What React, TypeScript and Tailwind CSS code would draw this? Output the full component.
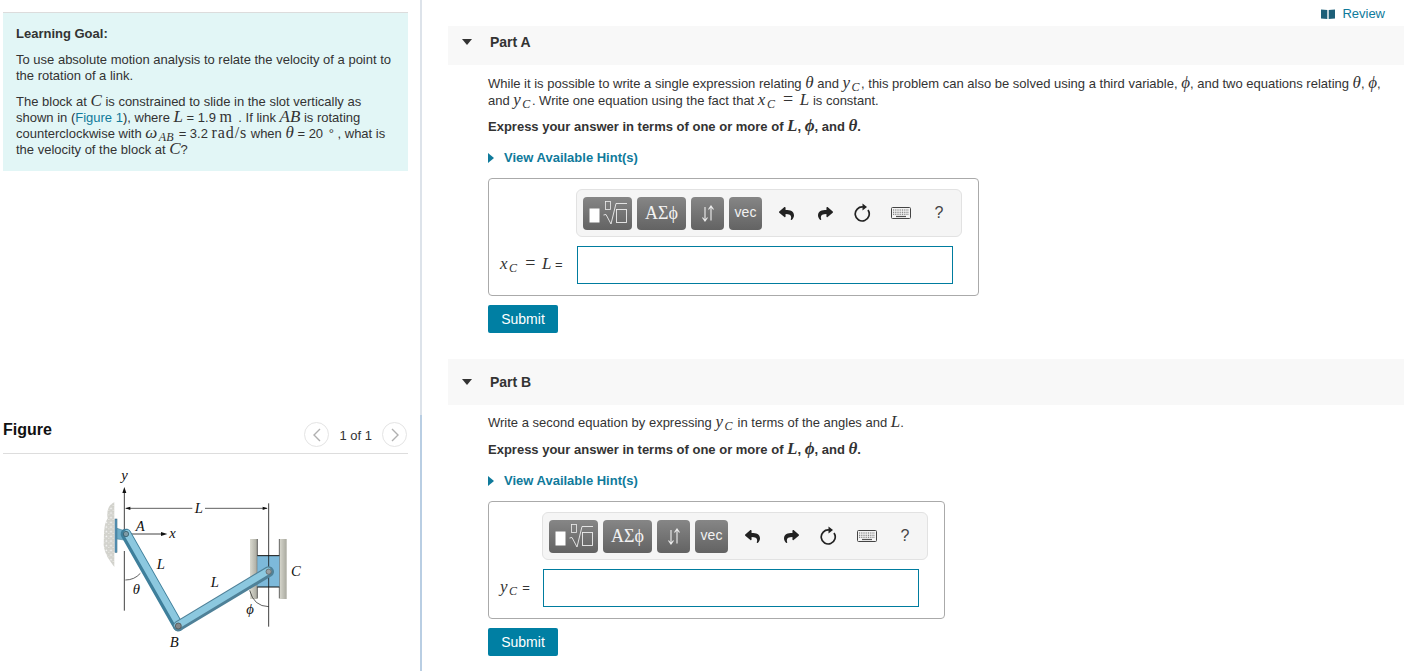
import type { ReactNode } from "react";
import { FaReply, FaShare } from "react-icons/fa";

const serif = "font-['Liberation_Serif',serif] leading-[0]";

const M = ({ children }: { children: ReactNode }) => <i className={`${serif} text-[17px]`}>{children}</i>;

const Sub = ({ v, s }: { v: string; s: string }) => (
  <span className={`${serif} text-[17px]`}>
    <i>{v}</i>
    <i className="relative top-[3px] mx-[1.5px] text-[12px]">{s}</i>
  </span>
);

const Eq = () => <span className={`${serif} mx-[3px] text-[18px]`}>=</span>;

function RootIcon() {
  return (
    <svg width="38" height="26" viewBox="0 0 38 26" fill="none" stroke="#eee">
      <rect x="0.5" y="8.5" width="10" height="14" fill="#fff" stroke="none" />
      <rect x="16.5" y="1.5" width="5" height="8" strokeWidth="0.8" />
      <path d="M14.5 15 L17 14.5 L22 24 L27 3.5 L38 3.5" strokeWidth="0.9" />
      <rect x="27.5" y="9.5" width="10" height="13" strokeWidth="0.9" />
    </svg>
  );
}

function ArrowsIcon() {
  return (
    <svg width="14" height="17" viewBox="0 0 14 17" fill="none" stroke="#eee" strokeWidth="1.1">
      <path d="M4 2 V15.5 M1.5 12.5 L4 16 L6.5 12.5" />
      <path d="M10 15.5 V1.5 M7.5 4.5 L10 1 L12.5 4.5" />
    </svg>
  );
}

function ResetIcon() {
  return (
    <svg width="18" height="20" viewBox="0 0 18 20" fill="none">
      <path d="M14 7 A7 7 0 1 1 9 4" stroke="#222" strokeWidth="1.7" />
      <path d="M8.5 0.5 L13 4 L8.5 7.5 Z" fill="#222" />
    </svg>
  );
}

function KeyboardIcon() {
  return (
    <svg width="20" height="12" viewBox="0 0 20 12">
      <rect x="0.5" y="0.5" width="19" height="11" rx="1" fill="#f4f4f4" stroke="#444" />
      <path d="M2 3 H18 M2 5.2 H18 M2 7.2 H18" stroke="#666" strokeWidth="1.1" strokeDasharray="1 0.8" />
      <path d="M5 9.5 H15" stroke="#555" strokeWidth="1.2" />
    </svg>
  );
}

function Toolbar() {
  const btn =
    "flex h-[33px] items-center justify-center rounded-[4px] bg-gradient-to-b from-[#868686] to-[#636363] text-[#f2f2f2]";
  return (
    <div className="flex h-[48px] w-[386px] items-center rounded-[6px] border border-[#e2e2e2] bg-[#f5f5f5] pl-[6px]">
      <div className="flex gap-[5px]">
        <div className={`${btn} w-[49px] pl-[6px] justify-start`}>
          <RootIcon />
        </div>
        <div className={`${btn} w-[49px] font-['Liberation_Serif',serif] text-[18px]`}>ΑΣϕ</div>
        <div className={`${btn} w-[33px]`}>
          <ArrowsIcon />
        </div>
        <div className={`${btn} w-[33px] pb-[3px] text-[14px]`}>vec</div>
      </div>
      <div className="ml-[14px] flex items-center text-[#222]">
        <span className="flex w-[20px] justify-center"><FaReply size={15} /></span>
        <span className="ml-[19px] flex w-[20px] justify-center"><FaShare size={15} /></span>
        <span className="ml-[18px] flex w-[20px] justify-center"><ResetIcon /></span>
        <span className="ml-[18px] flex w-[20px] justify-center"><KeyboardIcon /></span>
        <span className="ml-[18px] flex w-[20px] justify-center text-[16px] text-[#444]">?</span>
      </div>
    </div>
  );
}

function Hint() {
  return (
    <div className="mt-[15px] flex h-[16px] items-center font-bold text-[#0f7a9b]">
      <span className="h-0 w-0 border-y-[5px] border-l-[6px] border-y-transparent border-l-[#0f7a9b]" />
      <span className="ml-[10px]">View Available Hint(s)</span>
    </div>
  );
}

function PartBar({ title, h }: { title: string; h: string }) {
  return (
    <div className={`flex items-center bg-[#f8f8f8] pl-[14px] ${h}`}>
      <span className="h-0 w-0 border-x-[5px] border-t-[6px] border-x-transparent border-t-[#333]" />
      <span className="ml-[18px] text-[14px] font-bold text-[#333]">{title}</span>
    </div>
  );
}

function Diagram() {
  return (
    <svg width="220" height="200" viewBox="0 0 660 600" className="ml-[88px] mt-[11px]">
      <defs>
        <pattern id="rock" width="14" height="14" patternUnits="userSpaceOnUse">
          <rect width="14" height="14" fill="#d4d4ce" />
          <circle cx="4" cy="4" r="3.4" fill="#fbfbf8" stroke="#b3b3ac" />
          <circle cx="11" cy="10" r="2.8" fill="#f8f8f4" stroke="#acaca5" />
        </pattern>
        <linearGradient id="wall" x1="0" y1="0" x2="1" y2="0">
          <stop offset="0" stopColor="#d9d9cf" />
          <stop offset="1" stopColor="#a9a99f" />
        </linearGradient>
      </defs>
      {/* ground and plate */}
      <path d="M70 112 C52 118 46 140 50 160 C36 180 40 215 38 240 C42 270 55 285 70 306 Z" fill="url(#rock)" />
      <rect x="72" y="162" width="6" height="100" fill="#5d9dc0" stroke="#28566f" strokeWidth="1.5" />
      <path d="M78 190 L110 200 L100 225 L78 222 Z" fill="#6dacc8" stroke="#3f7a94" strokeWidth="1.5" />
      {/* walls */}
      <rect x="477" y="222" width="22" height="180" fill="url(#wall)" />
      <rect x="565" y="222" width="22" height="180" fill="url(#wall)" />
      <path d="M499 222 V400 M565 222 V400" stroke="#222" strokeWidth="2" />
      <rect x="499" y="272" width="66" height="94" fill="#7db9da" />
      <path d="M499 272 H565 M499 366 H565" stroke="#111" strokeWidth="3" />
      {/* guide lines */}
      <path d="M100 80 V207 M100 258 V437 M533 115 V485" stroke="#111" strokeWidth="2.4" fill="none" />
      <path d="M100 66 L94 84 H106 Z" fill="#111" />
      <path d="M104 130 H304 M342 130 H528" stroke="#111" strokeWidth="2" />
      <path d="M103 130 L118 125 V135 Z M530 130 L515 125 V135 Z" fill="#111" />
      <path d="M100 207 H215" stroke="#111" strokeWidth="2.4" />
      <path d="M229 207 L210 201 V213 Z" fill="#111" />
      <path d="M103 345 Q130 345 148 325" stroke="#111" strokeWidth="2" fill="none" />
      <path d="M476 376 Q488 424 533 425" stroke="#111" strokeWidth="2" fill="none" />
      {/* links */}
      <line x1="105" y1="207" x2="262" y2="483" stroke="#3e7f9b" strokeWidth="32" strokeLinecap="round" />
      <line x1="108" y1="205" x2="265" y2="481" stroke="#8cc8df" strokeWidth="20" strokeLinecap="round" />
      <line x1="262" y1="483" x2="533" y2="320" stroke="#4f8198" strokeWidth="32" strokeLinecap="round" />
      <line x1="260" y1="481" x2="531" y2="318" stroke="#8cc8df" strokeWidth="20" strokeLinecap="round" />
      <circle cx="105" cy="207" r="8" fill="#7e9aa5" stroke="#27505f" strokeWidth="2" />
      <circle cx="262" cy="483" r="9" fill="#85888a" stroke="#444" strokeWidth="2" />
      <circle cx="533" cy="320" r="8" fill="#9aa0a2" stroke="#555" strokeWidth="2" />
      <g fontFamily="'Liberation Serif',serif" fontStyle="italic" fontSize="44" fill="#111">
        <text x="91" y="44">y</text>
        <text x="134" y="197">A</text>
        <text x="235" y="218">x</text>
        <text x="311" y="144">L</text>
        <text x="197" y="311">L</text>
        <text x="359" y="365">L</text>
        <text x="125" y="386">θ</text>
        <text x="466" y="447">ϕ</text>
        <text x="236" y="546">B</text>
        <text x="600" y="334">C</text>
      </g>
    </svg>
  );
}

export default function App() {
  return (
    <div className="flex h-[671px] overflow-hidden bg-white font-['Liberation_Sans',Arial,sans-serif] text-[13px] leading-[16px] text-[#333]">
      <div className="flex w-[422px] shrink-0 flex-col">
        <div className="h-[415px] border-r-2 border-[#dde3ea] pl-[3px] pr-[12px] pt-[12px]">
          <div className="h-[159px] border-t border-[#dcdcdc] bg-[#e2f6f6] px-[13px] pt-[13px]">
            <p className="font-bold">Learning Goal:</p>
            <p className="mt-[10px]">
              To use absolute motion analysis to relate the velocity of a point to the rotation of a link.
            </p>
            <p className="mt-[10px]">
              The block at <M>C</M> is constrained to slide in the slot vertically as shown in (
              <span className="text-[#0f7a9b]">Figure 1</span>), where <M>L</M> = 1.9 <span className={`${serif} mr-[2px] text-[16px] tracking-[0.8px]`}>m</span> . If
              link <M>AB</M> is rotating counterclockwise with <Sub v="ω" s="AB" /> = 3.2{" "}
              <span className={`${serif} text-[16px] tracking-[0.9px]`}>rad/s</span> when <M>θ</M> = 20 <span className="ml-[2px]">°</span> , what is the
              velocity of the block at <M>C</M>?
            </p>
          </div>
        </div>
        <div className="flex-1 border-r-2 border-[#b9cee3] pl-[3px] pr-[12px]">
          <div className="flex h-[39px] items-end justify-between border-b border-[#dddddd] pb-[6px]">
            <span className="mb-[9px] text-[16px] font-bold text-[#111]">Figure</span>
            <div className="mr-[1px] flex items-center">
              <span className="flex h-[25px] w-[25px] items-center justify-center rounded-full border border-[#e4e4e4]">
                <svg width="8" height="14" viewBox="0 0 8 14" fill="none" stroke="#b0b0b0" strokeWidth="1.4"><path d="M7 1 L1 7 L7 13" /></svg>
              </span>
              <span className="mx-[10px] translate-y-[1px] text-[#333]">1 of 1</span>
              <span className="flex h-[25px] w-[25px] items-center justify-center rounded-full border border-[#e4e4e4]">
                <svg width="8" height="14" viewBox="0 0 8 14" fill="none" stroke="#b0b0b0" strokeWidth="1.4"><path d="M1 1 L7 7 L1 13" /></svg>
              </span>
            </div>
          </div>
          <Diagram />
        </div>
      </div>

      <div className="w-[982px] pl-[26px]">
        <div className="flex h-[26px] items-center justify-end pr-[19px] pt-[1px] text-[#0f7a9b]">
          <svg width="14" height="10" viewBox="0 0 14 10" className="mr-[7px]" fill="#1d5f78">
            <path d="M0 0.5 L6.3 1 V10 L0 9.5 Z" />
            <path d="M14 0.5 L7.7 1 V10 L14 9.5 Z" />
          </svg>
          Review
        </div>
        <PartBar title="Part A" h="h-[39px] pb-[7px]" />
        <div className="pl-[40px] pt-[10px]">
          <p className="w-[905px] leading-[17px]">
            While it is possible to write a single expression relating <M>θ</M> and <Sub v="y" s="C" />, this problem can also be solved using a third
            variable, <M>ϕ</M>, and two equations relating <M>θ</M>, <M>ϕ</M>, and <Sub v="y" s="C" />. Write one equation using the fact that{" "}
            <Sub v="x" s="C" /> <Eq /> <M>L</M> is constant.
          </p>
          <p className="mt-[10px] font-bold">
            Express your answer in terms of one or more of <M>L</M>, <M>ϕ</M>, and <M>θ</M>.
          </p>
          <Hint />
          <div className="mt-[12px] flex h-[118px] w-[491px] flex-col rounded-[4px] border border-[#aaaaaa] pt-[10px]">
            <div className="ml-[87px]"><Toolbar /></div>
            <div className="mt-[9px] flex items-center pl-[11px]">
              <span className="w-[77px] whitespace-nowrap">
                <Sub v="x" s="C" /> <Eq /> <M>L</M> =
              </span>
              <div className="h-[38px] w-[376px] border border-[#007c9f] bg-white" />
            </div>
          </div>
          <button className="mt-[9px] h-[28px] w-[70px] rounded-[2px] bg-[#007fa3] text-[14px] font-medium text-white">Submit</button>
        </div>
        <div className="mt-[26px]"><PartBar title="Part B" h="h-[46px]" /></div>
        <div className="pl-[40px] pt-[10px]">
          <p>
            Write a second equation by expressing <Sub v="y" s="C" /> in terms of the angles and <M>L</M>.
          </p>
          <p className="mt-[11px] font-bold">
            Express your answer in terms of one or more of <M>L</M>, <M>ϕ</M>, and <M>θ</M>.
          </p>
          <Hint />
          <div className="mt-[12px] flex h-[118px] w-[457px] flex-col rounded-[4px] border border-[#aaaaaa] pt-[10px]">
            <div className="ml-[53px]"><Toolbar /></div>
            <div className="mt-[9px] flex items-center pl-[11px]">
              <span className="w-[43px] whitespace-nowrap">
                <Sub v="y" s="C" /> =
              </span>
              <div className="h-[38px] w-[376px] border border-[#007c9f] bg-white" />
            </div>
          </div>
          <button className="mt-[9px] h-[28px] w-[70px] rounded-[2px] bg-[#007fa3] text-[14px] font-medium text-white">Submit</button>
        </div>
      </div>
    </div>
  );
}
